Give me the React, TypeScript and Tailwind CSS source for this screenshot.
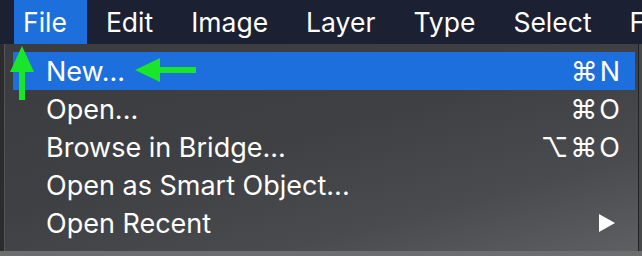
import React from "react";

const menus = ["File", "Edit", "Image", "Layer", "Type", "Select", "F"];

const items: { label: string; shortcut?: string; sub?: boolean; active?: boolean }[] = [
  { label: "New...", shortcut: "⌘N", active: true },
  { label: "Open...", shortcut: "⌘O" },
  { label: "Browse in Bridge...", shortcut: "⌥⌘O" },
  { label: "Open as Smart Object..." },
  { label: "Open Recent", sub: true },
];

export default function App() {
  return (
    <div
      className="relative w-[642px] h-[256px] overflow-hidden bg-[#2e2f31] text-white flex flex-col"
      style={{ fontFamily: "Inter, 'Noto Sans', sans-serif" }}
    >
      <div className="h-[44px] bg-[#1b2033] flex items-stretch pl-[14px] text-[26.5px] leading-none shrink-0 whitespace-nowrap">
        {menus.map((m, i) => (
          <div
            key={m}
            className={
              i === 0
                ? "bg-[#1d6fdc] flex items-center pl-[9px] pr-[20px]"
                : "flex items-center pl-[19px] pr-[19px]"
            }
          >
            {m}
          </div>
        ))}
      </div>
      <div className="flex flex-1">
        <div className="w-[5px] bg-[#2c2c2e] border-r border-[#555]" />
        <div className="flex-1 flex flex-col pt-[8px] pb-[9px] pl-[8px] pr-[3px] bg-[linear-gradient(165deg,#3b3c3f_0%,#3f4043_45%,#4a4b4e_75%,#5d5f62_100%)]">
          {items.map((it) => (
            <div
              key={it.label}
              className={`h-[38px] flex items-center justify-between pl-[33px] pr-[13px] text-[27px] leading-none ${
                it.active ? "bg-[#1c6fdc]" : ""
              }`}
            >
              <span>{it.label}</span>
              {it.shortcut && (
                <span className="tracking-[2px]" style={{ fontFamily: "Inter, 'DejaVu Sans', sans-serif" }}>
                  {it.shortcut}
                </span>
              )}
              {it.sub && (
                <svg width="16" height="18" viewBox="0 0 16 18" className="mr-[7px]">
                  <path d="M0 0 L16 9 L0 18 Z" fill="white" />
                </svg>
              )}
            </div>
          ))}
        </div>
        <div className="w-[4px] bg-[#47484a] border-l border-[#222]" />
      </div>
      <div className="h-[5px] bg-[#6c6d6f] shrink-0" />
      <svg className="absolute left-0 top-0 pointer-events-none" width="642" height="256">
        <path d="M22 46 L34 72 L25 72 L25 100 L19 100 L19 72 L10 72 Z" fill="#19e62a" />
        <path d="M135 70 L160 58 L160 67 L196 67 L196 73 L160 73 L160 82 Z" fill="#19e62a" />
      </svg>
    </div>
  );
}
